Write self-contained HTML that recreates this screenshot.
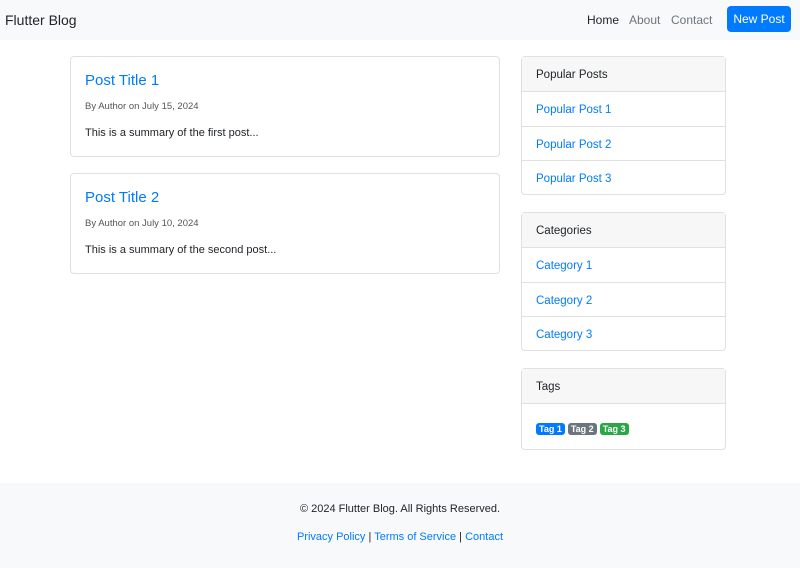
<!DOCTYPE html>
<html><head><meta charset="utf-8"><style>
*{box-sizing:border-box;margin:0;padding:0}
body{width:800px;height:568px;font-family:"Liberation Sans",sans-serif;font-size:12px;color:#212529;background:#fff;position:relative;overflow:hidden}
a{color:#007bff;text-decoration:none}
.nav{position:absolute;left:0;top:0;width:800px;height:40px;background:#f8f9fa}
.brand{position:absolute;left:5px;top:12px;font-size:14px;color:#212529}
.nl{position:absolute;top:13px;font-size:12px;color:#6c757d}
.btn{position:absolute;left:727px;top:6px;width:64px;height:26px;background:#007bff;color:#fff;border-radius:4px;font-size:12px;text-align:center;line-height:26px}
.card{position:absolute;border:1px solid #e0e0e0;border-radius:4px;background:#fff}
.post h2{position:absolute;left:14px;top:15px;font-size:15px;font-weight:normal;color:#007bff}
.post .m{position:absolute;left:14px;top:44px;font-size:9.5px;color:#555}
.post .s{position:absolute;left:14px;top:70px;font-size:11px}
.hd{height:35px;background:#f7f7f7;border-bottom:1px solid #e0e0e0;padding:12px 14px;font-size:11.5px}
.it{height:34.5px;border-bottom:1px solid #e0e0e0;padding:12px 14px;font-size:11.5px;color:#007bff}
.it:last-child{border-bottom:none}
.tag{display:inline-block;color:#fff;font-size:9px;font-weight:bold;padding:1px 3px;border-radius:3px;margin-right:3px}
.foot{position:absolute;left:0;top:483px;width:800px;height:85px;background:#f8f9fa;text-align:center;font-size:11px}
</style></head><body>
<div class="nav">
<div class="brand">Flutter Blog</div>
<div class="nl" style="left:587px;color:#212529">Home</div>
<div class="nl" style="left:629px">About</div>
<div class="nl" style="left:671px">Contact</div>
<div class="btn">New Post</div>
</div>
<div class="card post" style="left:70px;top:56px;width:430px;height:101px"><h2>Post Title 1</h2><div class="m">By Author on July 15, 2024</div><div class="s">This is a summary of the first post...</div></div>
<div class="card post" style="left:70px;top:173px;width:430px;height:101px"><h2>Post Title 2</h2><div class="m">By Author on July 10, 2024</div><div class="s">This is a summary of the second post...</div></div>
<div class="card" style="left:521px;top:56px;width:205px;height:139px"><div class="hd">Popular Posts</div><div class="it">Popular Post 1</div><div class="it">Popular Post 2</div><div class="it">Popular Post 3</div></div>
<div class="card" style="left:521px;top:212px;width:205px;height:139px"><div class="hd">Categories</div><div class="it">Category 1</div><div class="it">Category 2</div><div class="it">Category 3</div></div>
<div class="card" style="left:521px;top:368px;width:205px;height:82px"><div class="hd">Tags</div><div style="padding:17px 14px"><span class="tag" style="background:#007bff">Tag 1</span><span class="tag" style="background:#6c757d">Tag 2</span><span class="tag" style="background:#28a745">Tag 3</span></div></div>
<div class="foot"><div style="margin-top:20px">© 2024 Flutter Blog. All Rights Reserved.</div><div style="margin-top:16px"><a>Privacy Policy</a> | <a>Terms of Service</a> | <a>Contact</a></div></div>
</body></html>
